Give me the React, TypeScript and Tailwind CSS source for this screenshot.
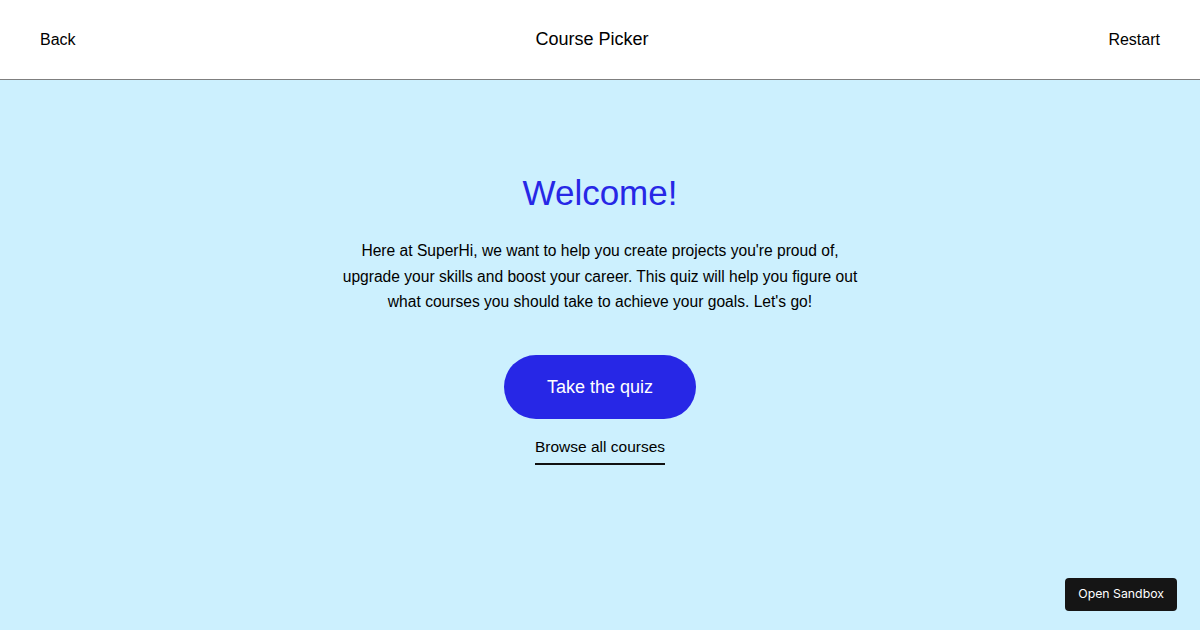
export default function App() {
    return (
        <div className="min-h-[630px] flex flex-col bg-[#ccf0fe] text-black" style={{ fontFamily: '"Liberation Sans", Arial, sans-serif' }}>
            <header className="h-20 bg-white border-b border-[#7f7f7f] flex items-center justify-between px-10">
                <a className="text-base">Back</a>
                <span className="text-lg leading-6 pb-[2px]">Course Picker</span>
                <a className="text-base">Restart</a>
            </header>
            <main className="flex flex-col items-center pt-[93px]">
                <h1 className="text-[35px] leading-[40px] text-[#2727e6]">Welcome!</h1>
                <p className="mt-[25px] max-w-[525px] text-center text-[15.6px] leading-[25.6px]">
                    Here at SuperHi, we want to help you create projects you're proud of, upgrade your skills and boost your career. This quiz will help you figure out what courses you should take to achieve your goals. Let's go!
                </p>
                <button className="mt-10 w-[192px] h-16 rounded-full bg-[#2727e6] text-white text-lg">Take the quiz</button>
                <a className="mt-4 text-[15.5px] leading-6 pb-[4px] border-b-2 border-[#111]">Browse all courses</a>
            </main>
            <button className="fixed right-[23px] bottom-[19px] h-[33px] px-[13px] rounded-[4px] bg-[#151515] text-white text-[12.3px]" style={{ fontFamily: 'Inter, sans-serif' }}>Open Sandbox</button>
        </div>
    );
}
